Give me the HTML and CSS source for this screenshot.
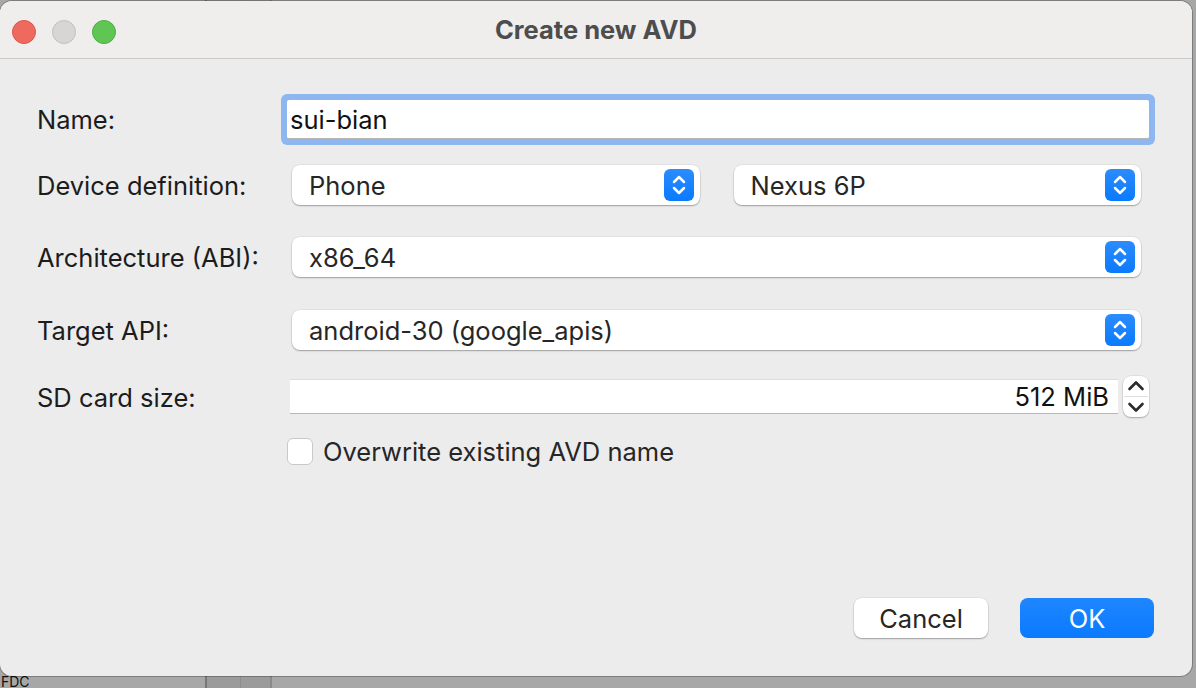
FILE: index.html
```html
<!DOCTYPE html>
<html lang="en">
  <head>
    <meta charset="UTF-8" />
    <title>Create new AVD</title>
    <link rel="stylesheet" href="styles.css">
  </head>
  <body>
    <span class="behind">FDC</span>
    <div class="window">
      <div class="titlebar">
        <div class="lights">
          <span class="light close"></span>
          <span class="light min"></span>
          <span class="light zoom"></span>
        </div>
        <h1 class="title">Create new AVD</h1>
      </div>

      <div class="form">
        <div class="row row-name">
          <label class="label">Name:</label>
          <div class="field">
            <div class="input focus">sui-bian</div>
          </div>
        </div>

        <div class="row row-device">
          <label class="label">Device definition:</label>
          <div class="field pair">
            <div class="popup">
              <span>Phone</span>
              <span class="arrows">
                <svg width="30" height="32" viewBox="0 0 30 32"><path d="M10 13 L15 8 L20 13 M10 19 L15 24 L20 19" /></svg>
              </span>
            </div>
            <div class="popup">
              <span>Nexus 6P</span>
              <span class="arrows">
                <svg width="30" height="32" viewBox="0 0 30 32"><path d="M10 13 L15 8 L20 13 M10 19 L15 24 L20 19" /></svg>
              </span>
            </div>
          </div>
        </div>

        <div class="row row-abi">
          <label class="label">Architecture (ABI):</label>
          <div class="field pair">
            <div class="popup">
              <span>x86_64</span>
              <span class="arrows">
                <svg width="30" height="32" viewBox="0 0 30 32"><path d="M10 13 L15 8 L20 13 M10 19 L15 24 L20 19" /></svg>
              </span>
            </div>
          </div>
        </div>

        <div class="row row-api">
          <label class="label">Target API:</label>
          <div class="field pair">
            <div class="popup">
              <span>android-30 (google_apis)</span>
              <span class="arrows">
                <svg width="30" height="32" viewBox="0 0 30 32"><path d="M10 13 L15 8 L20 13 M10 19 L15 24 L20 19" /></svg>
              </span>
            </div>
          </div>
        </div>

        <div class="row row-sd">
          <label class="label">SD card size:</label>
          <div class="field sd">
            <div class="number">512 MiB</div>
            <div class="stepper">
              <svg width="26" height="41" viewBox="0 0 26 41">
                <line x1="1" y1="20.5" x2="25" y2="20.5" class="divider" />
                <path d="M6.5 13 L13 6.5 L19.5 13 M6.5 28 L13 34.5 L19.5 28" />
              </svg>
            </div>
          </div>
        </div>

        <div class="row row-check">
          <span class="label"></span>
          <div class="field check-row">
            <span class="checkbox"></span>
            <span class="check-label">Overwrite existing AVD name</span>
          </div>
        </div>
      </div>

      <div class="buttons">
        <button class="btn">Cancel</button>
        <button class="btn primary">OK</button>
      </div>
    </div>
  </body>
</html>
```

FILE: styles.css
```css
* {
  box-sizing: border-box;
}
body {
  margin: 0;
  padding-top: 1px;
  height: 688px;
  overflow: hidden;
  position: relative;
  font-family: Inter, "Liberation Sans", sans-serif;
  background-color: #a7a7a7;
  background-image:
    linear-gradient(to right, transparent 205px, #777 205px, #777 207px, #9b9b9b 207px, #9b9b9b 240px, #8e8e8e 240px, #8e8e8e 241px, #9b9b9b 241px, #9b9b9b 270px, #8a8a8a 270px, #8a8a8a 272px, transparent 272px);
}
.behind {
  position: absolute;
  left: 1px;
  bottom: 0;
  font-size: 14px;
  line-height: 12px;
  color: #111;
}
.window {
  position: relative;
  width: 1192px;
  height: 675px;
  background: #ececec;
  border-radius: 12px;
  box-shadow: 0 0 0 1px rgba(0, 0, 0, 0.25);
  overflow: hidden;
}
.titlebar {
  height: 58px;
  background: #efeeed;
  border-bottom: 1px solid #c9c9c9;
  display: flex;
  align-items: center;
  justify-content: center;
  position: relative;
}
.lights {
  position: absolute;
  left: 12px;
  top: 19px;
  display: flex;
  gap: 16px;
}
.light {
  width: 24px;
  height: 24px;
  border-radius: 50%;
}
.light.close {
  background: #ee6a5f;
  border: 1px solid #d7574d;
}
.light.min {
  background: #d8d6d4;
  border: 1px solid #c2c0be;
}
.light.zoom {
  background: #5fc553;
  border: 1px solid #4caf42;
}
.title {
  margin: 0;
  font-size: 25.5px;
  font-weight: 700;
  color: #4d4d4d;
}

.form {
  padding-left: 37px;
}
.row {
  display: flex;
  align-items: center;
}
.row-name {
  height: 52px;
  margin-top: 34px;
}
.row-device {
  height: 40px;
  margin-top: 20px;
}
.row-abi {
  height: 40px;
  margin-top: 32px;
}
.row-api {
  height: 40px;
  margin-top: 33px;
}
.row-sd {
  height: 41px;
  margin-top: 26px;
}
.row-check {
  height: 27px;
  margin-top: 21px;
}
.label {
  width: 250px;
  font-size: 25.5px;
  color: #1c1c1c;
  padding-top: 1px;
}
.field {
  width: 862px;
  display: flex;
  align-items: center;
  height: 100%;
}
.input {
  width: 100%;
  height: 39px;
  background: white;
  font-size: 25.5px;
  color: #111;
  padding-left: 3px;
  line-height: 39px;
  border-bottom: 1px solid #b5b5b5;
}
.input.focus {
  box-shadow: 0 0 0 6px #8fb7ef;
  border-radius: 2px;
}
.pair {
  gap: 34px;
  padding: 0 8px 0 5px;
}
.popup {
  flex: 1;
  height: 40px;
  background: white;
  border-radius: 8px;
  box-shadow: 0 1px 1.5px rgba(0, 0, 0, 0.3), 0 0 0 0.5px rgba(0, 0, 0, 0.08);
  display: flex;
  align-items: center;
  justify-content: space-between;
  padding: 0 6px 0 17px;
  font-size: 25.5px;
  color: #262626;
}
.arrows {
  width: 30px;
  height: 32px;
  border-radius: 6px;
  background: linear-gradient(#2b8cfd, #0a7afe);
  display: flex;
}
.arrows path {
  fill: none;
  stroke: white;
  stroke-width: 2.5;
  stroke-linecap: round;
  stroke-linejoin: round;
}
.sd {
  gap: 5px;
  padding-left: 3px;
}
.number {
  flex: 1;
  height: 35px;
  background: white;
  border-bottom: 1px solid #b8b8b8;
  border-top: 1px solid #dcdcdc;
  text-align: right;
  padding-right: 9px;
  font-size: 25.5px;
  line-height: 34px;
  color: #111;
}
.stepper {
  width: 26px;
  height: 41px;
  background: white;
  border-radius: 8px;
  box-shadow: 0 1px 1.5px rgba(0, 0, 0, 0.25), 0 0 0 0.5px rgba(0, 0, 0, 0.1);
  display: flex;
}
.stepper path {
  fill: none;
  stroke: #2b2b2b;
  stroke-width: 2.6;
  stroke-linecap: round;
  stroke-linejoin: round;
}
.stepper .divider {
  stroke: #dedede;
  stroke-width: 1;
}
.check-row {
  gap: 10px;
}
.checkbox {
  width: 26px;
  height: 27px;
  background: white;
  border-radius: 6px;
  border: 1px solid #c9c9c9;
}
.check-label {
  font-size: 25.5px;
  color: #262626;
}

.buttons {
  position: absolute;
  right: 38px;
  bottom: 38px;
  display: flex;
  gap: 32px;
}
.btn {
  width: 134px;
  height: 40px;
  border: none;
  border-radius: 8px;
  background: white;
  box-shadow: 0 1px 1.5px rgba(0, 0, 0, 0.3), 0 0 0 0.5px rgba(0, 0, 0, 0.08);
  font-family: inherit;
  font-size: 25.5px;
  color: #262626;
}
.btn.primary {
  background: linear-gradient(#1f86fe, #0a7afe);
  color: white;
  box-shadow: none;
}
```
